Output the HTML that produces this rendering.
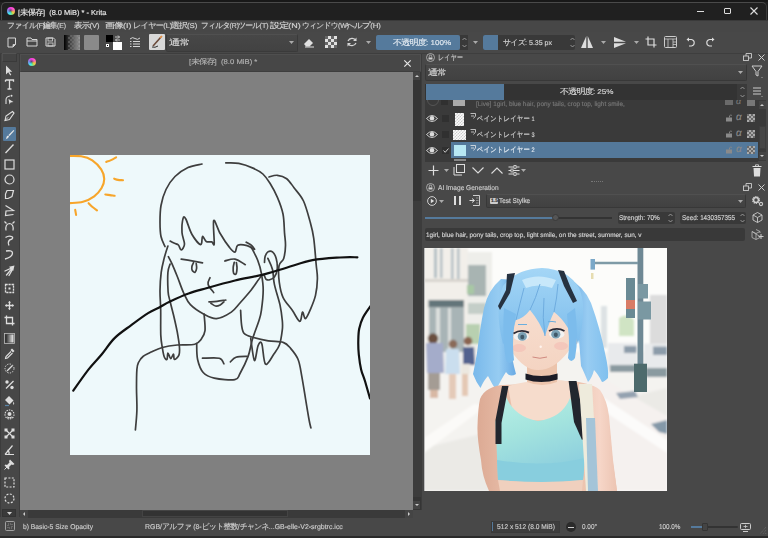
<!DOCTYPE html>
<html><head><meta charset="utf-8">
<style>
*{box-sizing:border-box;margin:0;padding:0}
html,body{width:768px;height:538px;overflow:hidden;background:#484848;font-family:"Liberation Sans",sans-serif;text-rendering:geometricPrecision;color:#c8c8c8}
.a{position:absolute}
.t{position:absolute;white-space:nowrap;font-size:7px;line-height:8px;-webkit-text-stroke:0.15px currentColor}
.jp{letter-spacing:-0.7px;font-size:1.12em;line-height:0}
svg{position:absolute;overflow:visible}
</style></head><body>
<!-- ===== title bar ===== -->
<div class="a" style="left:0;top:0;width:768px;height:20px;background:#202020"></div><div class="a" style="left:0;top:0;width:768px;height:2px;background:#181818"></div><div class="a" style="left:1px;top:2px;width:766px;height:18px;border-top:1px solid #4a4a4a;border-left:1px solid #4a4a4a;border-right:1px solid #3a3a3a;border-radius:5px 5px 0 0"></div>
<div class="a" style="left:6.6px;top:6.7px;width:8.4px;height:8.4px;border-radius:50%;background:radial-gradient(circle at 45% 45%,rgba(60,60,70,.7) 0,rgba(60,60,70,.35) 22%,transparent 40%),conic-gradient(#ff40e0 0deg,#ff60c0 60deg,#f0a860 100deg,#e8d040 130deg,#80e080 165deg,#40f0f0 210deg,#60b0f0 250deg,#9080e0 290deg,#e040f0 330deg,#ff40e0 360deg)"></div>
<div class="t" id="ti" style="left: 18.4px; top: 8.6px; color: rgb(232, 232, 232); font-size: 7.2px; transform-origin: 0px 50%; transform: scaleX(1.0376);">[<span class="jp">未保存</span>]&nbsp; (8.0 MiB) * - Krita</div>
<div class="a" style="left:697px;top:11px;width:7px;height:1px;background:#ddd"></div>
<div class="a" style="left:724px;top:7.5px;width:6.5px;height:6.5px;border:1px solid #ddd;border-radius:1px"></div>
<svg style="left:750px;top:7px" width="8" height="8"><path d="M0.5 0.5L7.5 7.5M7.5 0.5L0.5 7.5" stroke="#ddd" stroke-width="1.1"></path></svg>

<!-- ===== menu bar ===== -->
<div class="a" style="left:0;top:20px;width:768px;height:12px;background:#474747;border-top:1px solid #3a3a3a"></div>
<div class="t" id="m0" style="left: 7.11px; top: 23.3px; color: rgb(212, 212, 212); transform-origin: 0px 50%; transform: scaleX(1.0054);"><span class="jp">ファイル</span>(F)</div>
<div class="t" id="m1" style="left: 43.21px; top: 23.3px; color: rgb(212, 212, 212); transform-origin: 0px 50%; transform: scaleX(0.9752);"><span class="jp">編集</span>(E)</div>
<div class="t" id="m2" style="left: 74.11px; top: 23.3px; color: rgb(212, 212, 212); transform-origin: 0px 50%; transform: scaleX(1.087);"><span class="jp">表示</span>(V)</div>
<div class="t" id="m3" style="left: 104.5px; top: 23.3px; color: rgb(212, 212, 212); transform-origin: 0px 50%; transform: scaleX(1.2623);"><span class="jp">画像</span>(I)</div>
<div class="t" id="m4" style="left: 133px; top: 23.3px; color: rgb(212, 212, 212); transform-origin: 0px 50%; transform: scaleX(1.0427);"><span class="jp">レイヤー</span>(L)</div>
<div class="t" id="m5" style="left: 170.5px; top: 23.3px; color: rgb(212, 212, 212); transform-origin: 0px 50%; transform: scaleX(1.1175);"><span class="jp">選択</span>(S)</div>
<div class="t" id="m6" style="left: 200.8px; top: 23.3px; color: rgb(212, 212, 212); transform-origin: 0px 50%; transform: scaleX(0.9768);"><span class="jp">フィルタ</span>(R)</div>
<div class="t" id="m7" style="left: 238.11px; top: 23.3px; color: rgb(212, 212, 212); transform-origin: 0px 50%; transform: scaleX(0.9931);"><span class="jp">ツール</span>(T)</div>
<div class="t" id="m8" style="left: 269.8px; top: 23.3px; color: rgb(212, 212, 212); transform-origin: 0px 50%; transform: scaleX(1.281);"><span class="jp">設定</span>(N)</div>
<div class="t" id="m9" style="left: 302px; top: 23.3px; color: rgb(212, 212, 212); transform-origin: 0px 50%; transform: scaleX(0.9828);"><span class="jp">ウィンドウ</span>(W)</div>
<div class="t" id="m10" style="left: 346.11px; top: 23.3px; color: rgb(212, 212, 212); transform-origin: 0px 50%; transform: scaleX(1.1017);"><span class="jp">ヘルプ</span>(H)</div>


<!-- ===== toolbar ===== -->
<div class="a" style="left:0;top:32px;width:768px;height:21px;background:#484848"></div>
<div class="a" style="left:0;top:53px;width:768px;height:1px;background:#3e3e3e"></div>
<!-- new -->
<svg style="left:7px;top:37px" width="10" height="11"><path d="M1 1H8.5V7.5L6 10H1Z" fill="none" stroke="#d6d6d6" stroke-width="1"></path><path d="M6 10V7.5H8.5" fill="#d6d6d6" stroke="#d6d6d6" stroke-width="0.8"></path></svg>
<!-- open -->
<svg style="left:26px;top:37px" width="12" height="10"><path d="M1 1H5L6 2.5H11V9H1Z" fill="none" stroke="#d6d6d6" stroke-width="1"></path><path d="M1 4H11" stroke="#d6d6d6" stroke-width="1"></path></svg>
<!-- save -->
<svg style="left:45px;top:37px" width="11" height="10"><path d="M1 1H8.5L10 2.5V9H1Z" fill="none" stroke="#d6d6d6" stroke-width="1"></path><rect x="3" y="1" width="4.5" height="3" fill="none" stroke="#d6d6d6" stroke-width="0.8"></rect><rect x="3" y="6" width="5" height="3" fill="none" stroke="#d6d6d6" stroke-width="0.8"></rect></svg>
<!-- gradient -->
<div class="a" style="left:64px;top:34.5px;width:16px;height:15.5px;background:linear-gradient(90deg,#000,#444 40%,#999);"></div>
<div class="a" style="left:68px;top:34.5px;width:12px;height:15.5px;background-image:linear-gradient(45deg,#777 25%,transparent 25%,transparent 75%,#777 75%),linear-gradient(45deg,#777 25%,transparent 25%,transparent 75%,#777 75%);background-size:4px 4px;background-position:0 0,2px 2px;opacity:.5"></div>
<!-- pattern -->
<div class="a" style="left:83.5px;top:34.5px;width:15px;height:15.5px;background:#8a8a8a;border-radius:1px"></div>
<!-- fg/bg -->
<div class="a" style="left:105.5px;top:35px;width:7px;height:7px;background:#000"></div>
<div class="a" style="left:113px;top:42px;width:8.5px;height:8px;background:#fff"></div>
<div class="a" style="left:106px;top:44px;width:3px;height:3px;background:#000;border:0.5px solid #fff"></div>
<svg style="left:114px;top:35px" width="7" height="7"><path d="M1 2H5.5M4 0.5L5.5 2L4 3.5M6 5H1.5M3 3.5L1.5 5L3 6.5" fill="none" stroke="#ddd" stroke-width="0.8"></path></svg>
<!-- presets icon -->
<svg style="left:129px;top:36px" width="12" height="12"><path d="M1 3Q3.5 0.5 6 2.5T11 2" fill="none" stroke="#d6d6d6" stroke-width="1"></path><path d="M1 5.5H2.5M4 5.5H11M1 8H2.5M4 8H11M1 10.5H2.5M4 10.5H11" stroke="#d6d6d6" stroke-width="1"></path></svg>
<!-- brush preset -->
<div class="a" style="left:149px;top:34px;width:16px;height:16px;background:#d8d8d8;border-radius:1px"></div>
<svg style="left:149px;top:34px" width="16" height="16"><path d="M4 12L12 3" stroke="#6b4a3a" stroke-width="1.6"></path><path d="M11 4L13 2" stroke="#e89040" stroke-width="1.6"></path><path d="M3 13Q6 14 9 12" stroke="#333" stroke-width="1" fill="none"></path></svg>
<!-- blend combobox -->
<div class="a" style="left:166px;top:33.6px;width:132px;height:18.3px;background:linear-gradient(#474747,#424242);border:1px solid #3a3a3a;border-top-color:#505050;border-radius:2px"></div>
<div class="t" id="tb1" style="left: 168.5px; top: 40.1px; color: rgb(212, 212, 212); transform-origin: 0px 50%; transform: scaleX(1.4211);"><span class="jp">通常</span></div>
<svg style="left:289px;top:41px" width="5" height="3"><path d="M0 0H5L2.5 3Z" fill="#aaa"></path></svg>
<!-- eraser -->
<svg style="left:303px;top:36px" width="12" height="12"><path d="M1 8L6 3L10 7L6.5 10.5H3Z" fill="#e0e0e0"></path><path d="M2 11H11" stroke="#e0e0e0" stroke-width="1"></path></svg>
<!-- checker -->
<div class="a" style="left:325px;top:36px;width:12px;height:12px;background-image:linear-gradient(45deg,#e0e0e0 25%,transparent 25%,transparent 75%,#e0e0e0 75%),linear-gradient(45deg,#e0e0e0 25%,transparent 25%,transparent 75%,#e0e0e0 75%);background-color:#666;background-size:6px 6px;background-position:0 0,3px 3px"></div>
<!-- refresh -->
<svg style="left:346px;top:36px" width="12" height="12"><path d="M10 4.5A4.5 4.5 0 0 0 2 5M2 7.5A4.5 4.5 0 0 0 10 7" fill="none" stroke="#d6d6d6" stroke-width="1.2"></path><path d="M10.5 1.5V5H7Z M1.5 10.5V7H5Z" fill="#d6d6d6"></path></svg>
<svg style="left:366px;top:41px" width="5" height="3"><path d="M0 0H5L2.5 3Z" fill="#aaa"></path></svg>
<!-- opacity slider -->
<div class="a" style="left:376px;top:34.5px;width:84px;height:15.5px;background:#557a9c;border-radius:2px"></div>
<div class="t" id="tb2" style="left: 392.8px; top: 40px; color: rgb(224, 232, 240); transform-origin: 0px 50%; transform: scaleX(1.1581);"><span class="jp">不透明度</span>: 100%</div>
<div class="a" style="left:460px;top:34.5px;width:8px;height:15.5px;background:#393939"></div>
<svg style="left:462px;top:37px" width="5" height="11"><path d="M0.5 3L2.5 1L4.5 3M0.5 8L2.5 10L4.5 8" fill="none" stroke="#aaa" stroke-width="0.8"></path></svg>
<svg style="left:473px;top:41px" width="5" height="3"><path d="M0 0H5L2.5 3Z" fill="#aaa"></path></svg>
<!-- size slider -->
<div class="a" style="left:483px;top:34.5px;width:92px;height:15.5px;background:#393939;border-radius:2px"></div>
<div class="a" style="left:483px;top:34.5px;width:14.5px;height:15.5px;background:#557a9c;border-radius:2px 0 0 2px"></div>
<div class="t" id="tb3" style="left: 503.4px; top: 40px; color: rgb(212, 212, 212); transform-origin: 0px 50%; transform: scaleX(1.0053);"><span class="jp">サイズ</span>: 5.35 px</div>
<svg style="left:570px;top:37px" width="5" height="11"><path d="M0.5 3L2.5 1L4.5 3M0.5 8L2.5 10L4.5 8" fill="none" stroke="#aaa" stroke-width="0.8"></path></svg>
<!-- mirror -->
<svg style="left:580px;top:35px" width="14" height="14"><path d="M6.3 1L1 13H6.3Z" fill="#ddd"></path><path d="M7.7 1L13 13H7.7Z" fill="#ddd"></path></svg>
<svg style="left:601px;top:41px" width="5" height="3"><path d="M0 0H5L2.5 3Z" fill="#aaa"></path></svg>
<svg style="left:613px;top:36px" width="14" height="13"><path d="M1 1L13 5.8H1Z" fill="#ddd"></path><path d="M1 7.2H13L1 12Z" fill="#ddd"></path></svg>
<svg style="left:634px;top:41px" width="5" height="3"><path d="M0 0H5L2.5 3Z" fill="#aaa"></path></svg>
<!-- crop -->
<svg style="left:645px;top:36px" width="12" height="12"><path d="M3 0.5V9H11.5M0.5 3H9V11.5" fill="none" stroke="#ddd" stroke-width="1.2"></path></svg>
<!-- table -->
<svg style="left:664px;top:36px" width="13" height="12"><rect x="0.5" y="0.5" width="12" height="11" rx="1" fill="none" stroke="#ccc"></rect><path d="M0.5 3H12.5M4 3V11.5M9 3V11.5M9 6H12.5M9 8.5H12.5" stroke="#ccc" stroke-width="0.8"></path></svg>
<!-- undo redo -->
<svg style="left:686px;top:37px" width="10" height="10"><path d="M2.5 2.5H5.5A3.3 3.3 0 0 1 5.5 9H3" fill="none" stroke="#ddd" stroke-width="1.1"></path><path d="M0.5 2.5L3 0.5V4.5Z" fill="#ddd"></path></svg>
<svg style="left:705px;top:37px" width="10" height="10"><path d="M7.5 2.5H4.5A3.3 3.3 0 0 0 4.5 9H7" fill="none" stroke="#ddd" stroke-width="1.1"></path><path d="M9.5 2.5L7 0.5V4.5Z" fill="#ddd"></path></svg>

<!-- ===== left toolbox ===== -->
<div class="a" style="left:0;top:54px;width:20px;height:463px;background:#474747;border-left:1.5px solid #3c3c3c;border-right:1px solid #3c3c3c"></div>
<div class="a" style="left:1.5px;top:53px;width:15.5px;height:8.5px;background:#444;border:1px solid #3a3a3a;border-top-color:#535353;border-left-color:#505050"></div>
<div class="a" style="left:2.5px;top:127px;width:13.5px;height:14px;background:#557a9c;border-radius:1px"></div>
<div class="a" style="left:2px;top:509px;width:14px;height:8px;background:#393939;border:1px solid #333"></div>
<svg style="left:7px;top:512px" width="5" height="3"><path d="M0 0H5L2.5 3Z" fill="#ccc"></path></svg>
<!--TOOLS-->
<svg style="left:0;top:0;width:0;height:0"><defs><linearGradient id="g1"><stop offset="0" stop-color="#222"/><stop offset="1" stop-color="#eee"/></linearGradient></defs></svg>
<svg style="left:2.8px;top:64.5px" width="11" height="11"><path d="M3 0.5V9.5L5.2 7.3L7.3 10.5L8.3 9.8L6.3 6.8H9.2Z" fill="#ddd"/></svg>
<svg style="left:3.5px;top:78.5px" width="11" height="11"><path d="M1.5 1H9.5V2.8M5.5 1V10M3.5 10H7.5M1.5 1V2.8" fill="none" stroke="#ddd" stroke-width="1.3"/></svg>
<svg style="left:3.5px;top:94.0px" width="11" height="11"><path d="M2 10V6Q2 2.5 6 2" fill="none" stroke="#ddd" stroke-width="1.1"/><circle cx="7.5" cy="1.8" r="1" fill="#ddd"/><path d="M4.5 5L9.5 8L6.5 8.5L5.5 10.5Z" fill="#ddd"/></svg>
<svg style="left:3.5px;top:109.5px" width="11" height="11"><path d="M8.5 1.5L10 3L5.5 9.5L1 10.5L2 6Z" fill="none" stroke="#ddd" stroke-width="1.1"/><path d="M1 10.5L4.2 7.3" stroke="#ddd" stroke-width="0.9"/></svg>
<svg style="left:3.5px;top:128.5px" width="11" height="11"><path d="M9.5 1L10.3 1.8L5.5 7L4.5 6Z" fill="#e8e8e8"/><path d="M4.2 6.5L5 7.3Q4.5 10 1.5 10.5Q2.5 9.5 2.5 8Q3 6.8 4.2 6.5Z" fill="#e8e8e8"/></svg>
<svg style="left:3.5px;top:143.1px" width="11" height="11"><path d="M1.5 10L9.5 1.5" stroke="#ddd" stroke-width="1.3"/></svg>
<svg style="left:3.5px;top:158.5px" width="11" height="11"><rect x="1" y="1" width="9" height="9" fill="none" stroke="#ddd" stroke-width="1.2"/></svg>
<svg style="left:3.5px;top:174.2px" width="11" height="11"><circle cx="5.5" cy="5.5" r="4.5" fill="none" stroke="#ddd" stroke-width="1.2"/></svg>
<svg style="left:3.5px;top:188.5px" width="11" height="11"><path d="M3 1.5H9.5L8 7.5L4 9.5H1.5L1.5 5Z" fill="none" stroke="#ddd" stroke-width="1.2"/></svg>
<svg style="left:3.5px;top:204.5px" width="11" height="11"><path d="M1.5 0.5L9.5 5.5L2 6L1.5 10.5L9.5 9.5" fill="none" stroke="#ddd" stroke-width="1.2"/></svg>
<svg style="left:3.5px;top:219.5px" width="11" height="11"><path d="M2 10.5Q1 4 5.5 3.5Q10 4 9 10.5M0.5 1.5L2.5 3.5M10.5 1.5L8.5 3.5" fill="none" stroke="#ddd" stroke-width="1.2"/></svg>
<svg style="left:3.5px;top:234.5px" width="11" height="11"><path d="M1.5 2.5Q5 0 8.5 2Q9.5 4 5.5 5Q3.5 7 5 10.5" fill="none" stroke="#ddd" stroke-width="1.3"/></svg>
<svg style="left:3.5px;top:249.0px" width="11" height="11"><path d="M2 2Q8 1 8.5 4Q8.5 8 1 10" fill="none" stroke="#ddd" stroke-width="1.3"/></svg>
<svg style="left:3.5px;top:264.5px" width="11" height="11"><path d="M10.5 0.5L5 1.8L9.2 6Z" fill="#ddd"/><path d="M1 6L7.5 3M2.5 10L8 3.5M5 10.5L8.5 4.5" fill="none" stroke="#ddd" stroke-width="1.3" stroke-linecap="round"/></svg>
<svg style="left:3.5px;top:282.5px" width="11" height="11"><rect x="1.5" y="1.5" width="8" height="8" fill="none" stroke="#ddd" stroke-width="1.3" stroke-dasharray="2.2 0.8"/><rect x="4.5" y="4.5" width="2" height="2" fill="#ddd"/></svg>
<svg style="left:3.5px;top:299.5px" width="11" height="11"><path d="M5.5 1.5V9.5M1.5 5.5H9.5" stroke="#ddd" stroke-width="1.3"/><path d="M5.5 1L7 2.8H4ZM5.5 10L7 8.2H4ZM1 5.5L2.8 4V7ZM10 5.5L8.2 4V7Z" fill="#ddd"/></svg>
<svg style="left:3.5px;top:314.5px" width="11" height="11"><path d="M2.5 0.5V8.5H10.5M0.5 2.5H8.5V10.5" fill="none" stroke="#ddd" stroke-width="1.3"/></svg>
<svg style="left:3.5px;top:332.5px" width="11" height="11"><rect x="0.5" y="0.5" width="10" height="10" fill="none" stroke="#bbb" stroke-width="0.8"/><rect x="1.5" y="1.5" width="8" height="8" fill="url(#g1)"/></svg>
<svg style="left:3.5px;top:347.5px" width="11" height="11"><path d="M8 0.5L10.5 3L9 4.5L6.5 2Z" fill="#ddd"/><path d="M7 3.5L2 8.5L1.5 10.5L3.5 10L8.5 5" fill="none" stroke="#ddd" stroke-width="1.1"/></svg>
<svg style="left:3.5px;top:363.0px" width="11" height="11"><circle cx="5.5" cy="5.5" r="4.5" fill="none" stroke="#ddd" stroke-width="1" stroke-dasharray="1.3 1.3"/><path d="M3 8L8.5 2.5" stroke="#ddd" stroke-width="1.3"/></svg>
<svg style="left:3.5px;top:378.5px" width="11" height="11"><path d="M2 9.5L9.5 2" stroke="#ddd" stroke-width="1.2"/><circle cx="3" cy="3" r="1.7" fill="#ddd"/><circle cx="8" cy="8.5" r="1.7" fill="#ddd"/></svg>
<svg style="left:3.5px;top:394.5px" width="11" height="11"><path d="M1 5L5 1L9.5 5.5L5.5 9.5Z" fill="#ddd"/><path d="M9.5 6.5Q10.8 8.5 9.8 9.8Q8.6 9.8 9.5 6.5Z" fill="#ddd"/><path d="M1 10.5H5" stroke="#5b86a8" stroke-width="1.2"/></svg>
<svg style="left:3.5px;top:408.5px" width="11" height="11"><circle cx="5.5" cy="5.5" r="4.5" fill="none" stroke="#ddd" stroke-width="1.1" stroke-dasharray="1.5 1"/><circle cx="5.5" cy="5" r="2" fill="#ddd"/><path d="M3 8Q5.5 9.5 8 8" stroke="#ddd" fill="none"/></svg>
<svg style="left:3.5px;top:427.5px" width="11" height="11"><path d="M2 2L9 9M9 2L2 9" stroke="#ddd" stroke-width="1.1"/><rect x="0.5" y="0.5" width="3" height="3" fill="#ddd"/><rect x="7.5" y="0.5" width="3" height="3" fill="#ddd"/><rect x="0.5" y="7.5" width="3" height="3" fill="#ddd"/><rect x="7.5" y="7.5" width="3" height="3" fill="#ddd"/></svg>
<svg style="left:3.5px;top:443.5px" width="11" height="11"><path d="M1 10.5H10M1 10.5L8.5 1.5M5 10.5Q5.5 7.5 3.5 6" fill="none" stroke="#ddd" stroke-width="1.2"/></svg>
<svg style="left:3.5px;top:458.5px" width="11" height="11"><path d="M6 0.5L10.5 5L9 6L7.5 5.5L5 8L5.5 9.5L4.5 10.5L0.5 6.5L1.5 5.5L3 6L5.5 3.5L5 2Z" fill="#ddd"/><path d="M3.5 7.5L0.5 10.5" stroke="#ddd" stroke-width="1"/></svg>
<svg style="left:3.5px;top:477.1px" width="11" height="11"><rect x="1" y="1" width="9" height="9" fill="none" stroke="#ddd" stroke-width="1.2" stroke-dasharray="2 1.4"/></svg>
<svg style="left:3.5px;top:492.5px" width="11" height="11"><circle cx="5.5" cy="5.5" r="4.5" fill="none" stroke="#ddd" stroke-width="1.2" stroke-dasharray="2 1.5"/></svg>
<!--/TOOLS-->

<!-- ===== document window ===== -->
<div class="a" style="left:20px;top:54px;width:401px;height:17.7px;background:#474747;border-top:1px solid #4f4f4f;border-left:1px solid #4f4f4f;border-right:1px solid #505050;border-bottom:1px solid #3e3e3e"></div>
<div class="a" style="left:28px;top:58px;width:8.4px;height:8.4px;border-radius:50%;background:radial-gradient(circle at 45% 45%,rgba(60,60,70,.7) 0,rgba(60,60,70,.35) 22%,transparent 40%),conic-gradient(#ff40e0 0deg,#ff60c0 60deg,#f0a860 100deg,#e8d040 130deg,#80e080 165deg,#40f0f0 210deg,#60b0f0 250deg,#9080e0 290deg,#e040f0 330deg,#ff40e0 360deg)"></div>
<div class="t" id="dt" style="left: 188.9px; top: 59.4px; color: rgb(176, 176, 176); font-size: 6.8px; transform-origin: 0px 50%; transform: scaleX(1.1316);">[<span class="jp">未保存</span>]&nbsp; (8.0 MiB) *</div>
<svg style="left:404px;top:60px" width="7" height="7"><path d="M0.3 0.3L6.7 6.7M6.7 0.3L0.3 6.7" stroke="#e6e6e6" stroke-width="1.2"></path></svg>
<div class="a" style="left:20px;top:72px;width:393px;height:437.5px;background:#808080"></div>
<!-- scrollbars -->
<div class="a" style="left:413px;top:72px;width:8px;height:437.5px;background:#353535"></div><div class="a" style="left:413px;top:201px;width:8px;height:296px;background:#3c3c3c"></div>
<div class="a" style="left:413px;top:72px;width:7px;height:8px;background:#444"></div>
<svg style="left:414.5px;top:75px" width="4" height="2"><path d="M0 2H4L2 0Z" fill="#ccc"></path></svg>
<div class="a" style="left:413px;top:501px;width:7px;height:8px;background:#444"></div>
<svg style="left:414.5px;top:504px" width="4" height="2"><path d="M0 0H4L2 2Z" fill="#ccc"></path></svg>
<div class="a" style="left:20px;top:509.5px;width:393px;height:8px;background:#3a3a3a"></div>
<div class="a" style="left:20px;top:509.5px;width:8px;height:8px;background:#444"></div>
<svg style="left:23px;top:511.5px" width="2" height="4"><path d="M2 0V4L0 2Z" fill="#ccc"></path></svg>
<div class="a" style="left:405px;top:509.5px;width:8px;height:8px;background:#444"></div>
<svg style="left:408px;top:511.5px" width="2" height="4"><path d="M0 0V4L2 2Z" fill="#ccc"></path></svg>
<div class="a" style="left:142px;top:510px;width:146px;height:7px;background:#333;border:1px solid #444"></div>
<!-- paper -->
<div class="a" style="left:70px;top:154.5px;width:299.5px;height:300px;background:#eef9fb"></div>
<!--DRAW--><svg style="left:70px;top:154.5px;overflow:hidden" width="299.5" height="300" viewBox="70 154.5 299.5 300"><g fill="none" stroke-linecap="round" stroke-linejoin="round"><path d="M66.0 155.5C68.5 155.6 76.8 155.1 81.2 155.8C85.6 156.5 89.0 157.6 92.3 159.8C95.6 162.0 99.2 165.8 101.2 168.9C103.2 172.0 104.1 175.1 104.2 178.2C104.3 181.3 103.3 184.6 101.6 187.5C99.9 190.4 97.3 193.5 94.2 195.8C91.1 198.1 87.0 200.1 83.0 201.2C79.0 202.3 72.2 202.4 70.0 202.6" stroke="#f7a52a" stroke-width="2.1"></path><path d="M106.2 161.4C107.0 161.1 109.3 160.4 111.0 159.6C112.7 158.8 115.2 157.3 116.1 156.8" stroke="#f7a52a" stroke-width="2.1"></path><path d="M114.2 178.2C114.8 178.4 116.5 179.2 118.0 179.4C119.5 179.7 122.2 179.6 123.0 179.7" stroke="#f7a52a" stroke-width="2.1"></path><path d="M105.3 194.0C106.1 194.1 108.5 194.4 110.0 194.6C111.5 194.8 113.8 195.2 114.6 195.3" stroke="#f7a52a" stroke-width="2.1"></path><path d="M88.6 202.7C89.2 203.3 91.1 205.3 92.5 206.5C93.9 207.7 96.2 209.2 97.0 209.8" stroke="#f7a52a" stroke-width="2.1"></path><path d="M75.2 209.4L76.1 214.4" stroke="#f7a52a" stroke-width="2.1"></path><path d="M202.0 163.5C199.7 164.1 192.5 164.9 188.0 167.0C183.5 169.1 178.7 172.3 175.0 176.0C171.3 179.7 168.3 184.2 166.0 189.0C163.7 193.8 162.0 199.5 161.0 205.0C160.0 210.5 160.0 216.8 160.0 222.0C160.0 227.2 160.2 232.0 161.0 236.0C161.8 240.0 164.3 244.3 165.0 246.0" stroke="#3e3e3e" stroke-width="1.7"></path><path d="M225.8 162.4C228.0 162.5 234.2 162.0 238.8 162.9C243.4 163.8 249.6 166.1 253.6 167.9C257.6 169.7 260.2 171.0 262.9 173.5C265.6 176.0 267.6 178.9 270.0 182.8C272.4 186.7 275.2 191.7 277.4 196.8C279.6 201.9 281.8 207.6 283.0 213.5C284.2 219.4 284.1 226.9 284.5 232.1C284.9 237.3 285.6 240.6 285.5 244.9C285.4 249.2 284.8 254.5 283.7 257.9C282.6 261.3 279.7 261.3 279.0 265.3C278.3 269.3 278.6 276.6 279.3 281.9C280.0 287.1 280.8 292.1 283.0 296.8C285.2 301.5 289.5 305.8 292.3 309.8C295.1 313.8 298.0 320.6 299.7 320.9C301.4 321.2 301.6 312.1 302.5 311.6C303.4 311.1 304.1 318.4 305.3 318.1C306.6 317.8 308.3 313.7 310.0 309.8C311.7 305.9 314.3 300.2 315.5 294.9C316.7 289.6 317.3 283.5 317.4 278.2C317.5 272.9 316.7 270.1 316.1 263.3C315.5 256.5 314.7 244.7 313.7 237.6C312.7 230.5 311.7 227.1 310.0 220.9C308.3 214.7 306.1 206.1 303.5 200.5C300.9 194.9 297.0 191.2 294.2 187.5C291.4 183.8 289.5 180.3 286.7 178.2C283.9 176.1 280.3 175.1 277.4 174.8C274.4 174.5 270.4 176.2 269.0 176.5" stroke="#3e3e3e" stroke-width="1.7"></path><path d="M170.1 240.6C170.8 241.0 173.1 242.2 174.5 242.8C175.9 243.5 177.3 243.4 178.4 244.5C179.5 245.6 180.2 249.7 181.2 249.5C182.2 249.3 184.4 246.4 184.5 243.5C184.6 240.6 182.2 236.2 182.0 232.0C181.8 227.8 182.4 220.3 183.0 218.1C183.6 215.8 184.3 215.8 185.8 218.5C187.3 221.2 189.5 229.7 192.0 234.0C194.5 238.3 198.9 243.8 200.7 244.1C202.4 244.4 201.6 236.5 202.5 236.0C203.4 235.5 204.6 240.1 206.2 241.0C207.8 241.9 210.5 241.0 211.8 241.4C213.1 241.8 213.9 246.8 214.2 243.2C214.5 239.6 212.7 221.7 213.7 220.0C214.7 218.3 217.6 228.5 220.2 233.0C222.8 237.5 227.0 243.8 229.5 246.9C232.0 250.0 233.6 252.0 235.0 251.6C236.4 251.2 235.8 245.8 237.8 244.7C239.8 243.6 244.4 244.4 247.1 245.1C249.8 245.8 252.8 248.0 253.9 248.6" stroke="#3e3e3e" stroke-width="1.7"></path><path d="M246.2 241.7C247.1 242.3 250.4 243.9 251.8 245.1C253.2 246.3 254.1 248.2 254.6 248.8" stroke="#3e3e3e" stroke-width="1.7"></path><path d="M167.9 245.6C167.2 247.7 165.1 254.0 164.0 258.4C162.9 262.8 161.9 266.5 161.2 271.8C160.5 277.1 160.1 283.7 160.0 290.0C159.9 296.3 160.6 302.3 160.7 309.8C160.8 317.3 160.5 328.7 160.8 334.9C161.1 341.1 161.7 343.4 162.3 347.0C162.9 350.6 163.4 354.2 164.2 356.2C165.0 358.2 166.4 359.6 167.0 359.0C167.6 358.4 167.3 352.6 167.9 352.5C168.5 352.4 169.8 357.9 170.7 358.1C171.6 358.3 172.9 353.4 173.5 353.5C174.1 353.6 173.5 358.9 174.4 359.0C175.3 359.1 178.2 356.6 179.0 354.4C179.8 352.2 179.7 349.9 179.4 346.0C179.1 342.1 178.1 336.3 177.2 331.2C176.2 326.1 174.9 320.4 173.7 315.3C172.5 310.2 170.9 304.5 170.0 300.5C169.1 296.5 168.4 295.9 168.1 291.2C167.8 286.4 167.6 276.6 167.9 272.0C168.2 267.4 169.7 264.9 170.1 263.5" stroke="#3e3e3e" stroke-width="1.7"></path><path d="M168.4 256.2C169.0 257.3 170.3 259.5 171.8 262.9C173.3 266.2 175.4 271.3 177.4 276.3C179.4 281.3 181.7 288.4 183.9 293.0C186.1 297.6 187.1 300.8 190.4 304.2C193.7 307.6 199.2 311.2 203.5 313.5C207.8 315.8 211.9 318.4 216.5 318.1C221.1 317.8 227.4 314.2 231.3 311.6C235.2 309.0 236.7 306.2 240.0 302.5C243.3 298.8 247.5 294.1 251.2 289.5C254.9 284.9 259.8 276.4 262.3 274.6C264.8 272.8 264.8 277.9 266.0 278.7C267.2 279.5 268.3 279.7 269.7 279.3C271.1 278.9 273.1 278.2 274.4 276.5C275.6 274.8 276.9 272.1 277.2 269.0C277.5 265.9 277.0 260.8 276.2 257.9C275.4 255.0 273.9 252.5 272.5 251.4C271.1 250.3 269.1 250.6 267.9 251.4C266.7 252.2 265.7 254.2 265.1 256.0C264.5 257.8 264.6 261.0 264.5 262.0" stroke="#3e3e3e" stroke-width="1.7"></path><path d="M196.7 343.2C196.8 345.8 196.5 354.2 197.6 359.0C198.7 363.8 200.4 368.9 203.2 372.0C206.0 375.1 209.0 376.4 214.3 377.6C219.6 378.8 230.5 379.9 234.8 379.1C239.1 378.3 237.8 376.9 240.0 373.0C242.2 369.1 246.0 361.6 248.1 355.9C250.2 350.2 250.7 344.6 252.5 338.6C254.3 332.6 257.5 324.8 259.0 320.0C260.5 315.2 260.7 315.0 261.4 309.9C262.1 304.8 263.2 295.7 263.2 289.5C263.2 283.3 262.3 277.8 261.4 272.8C260.5 267.8 259.4 264.1 257.7 259.7C256.0 255.3 252.3 248.9 251.2 246.7" stroke="#3e3e3e" stroke-width="1.7"></path><path d="M204.1 313.5C204.2 316.3 205.5 326.0 205.0 330.2C204.5 334.4 203.0 336.3 201.3 338.6C199.6 340.9 198.8 342.8 194.8 343.8C190.8 344.8 182.6 344.0 177.2 344.5C171.8 345.0 166.6 345.8 162.3 347.0C158.0 348.2 154.4 350.1 151.2 351.6C148.0 353.1 145.1 354.3 143.0 356.0C140.9 357.7 139.5 359.9 138.5 362.0C137.5 364.1 137.2 364.6 136.9 368.9C136.6 373.1 136.5 380.7 136.5 387.5C136.5 394.3 137.1 402.8 136.9 409.8C136.7 416.8 135.7 426.1 135.4 429.3" stroke="#3e3e3e" stroke-width="1.7"></path><path d="M240.6 309.8C240.8 312.3 241.0 320.7 241.6 324.6C242.2 328.5 242.4 331.0 244.2 333.0C246.0 335.0 248.5 335.5 252.5 336.7C256.5 337.9 263.2 339.5 268.3 340.4C273.4 341.3 279.5 340.6 283.2 341.9C286.9 343.1 288.1 345.0 290.6 347.9C293.1 350.8 296.2 354.4 298.1 359.0C300.0 363.6 300.6 369.3 301.8 375.8C303.0 382.3 304.3 390.7 305.5 398.1C306.7 405.5 308.3 415.1 309.2 420.0C310.1 424.9 310.6 426.2 310.9 427.4" stroke="#3e3e3e" stroke-width="1.7"></path><path d="M202.5 357.7C205.3 357.7 215.7 356.8 219.3 357.7C222.9 358.6 223.1 362.4 223.9 363.3" stroke="#3e3e3e" stroke-width="1.7"></path><path d="M230.4 361.4C231.3 360.6 233.2 357.7 236.0 356.8C238.8 355.9 245.2 356.0 247.1 355.9" stroke="#3e3e3e" stroke-width="1.7"></path><path d="M267.9 257.9C268.7 259.8 271.4 264.7 272.5 269.0C273.6 273.3 273.1 278.0 274.4 283.9C275.6 289.8 278.7 298.4 280.0 304.4C281.3 310.4 281.9 315.9 282.3 320.0C282.7 324.1 282.8 325.3 282.3 329.3C281.8 333.3 280.9 340.2 279.5 344.2C278.1 348.2 276.2 350.2 273.9 353.5C271.6 356.8 267.5 365.4 265.5 363.7C263.5 362.0 263.0 346.3 261.8 343.2C260.6 340.1 259.3 342.3 258.1 345.1C256.9 347.9 255.6 361.2 254.4 360.0C253.2 358.8 251.3 341.4 250.7 337.7" stroke="#3e3e3e" stroke-width="1.7"></path><path d="M181.2 258.6C183.0 258.9 188.4 259.7 192.0 260.3C195.6 260.9 200.8 262.0 202.5 262.4" stroke="#3e3e3e" stroke-width="1.7"></path><path d="M193.5 262.2C193.2 262.8 192.1 264.7 191.9 266.0C191.7 267.3 191.8 269.1 192.3 270.0C192.8 270.9 194.4 272.1 195.1 271.7C195.8 271.3 196.4 269.3 196.6 267.9C196.8 266.4 196.3 263.8 196.2 263.0" stroke="#3e3e3e" stroke-width="1.7"></path><path d="M224.8 260.5C226.5 260.2 231.6 258.0 235.0 258.6C238.4 259.2 243.6 263.3 245.3 264.2" stroke="#3e3e3e" stroke-width="1.7"></path><path d="M234.3 261.8C234.1 262.7 233.3 265.2 233.2 267.0C233.1 268.8 233.1 271.5 233.6 272.6C234.1 273.7 235.4 274.3 236.0 273.5C236.6 272.7 236.9 269.9 237.0 268.0C237.1 266.1 236.5 263.0 236.4 262.0" stroke="#3e3e3e" stroke-width="1.7"></path><path d="M210.0 277.2C209.7 278.3 207.5 281.2 208.1 283.7C208.7 286.2 212.8 290.7 213.7 292.1" stroke="#3e3e3e" stroke-width="1.7"></path><path d="M209.0 301.4C210.3 301.3 214.2 301.1 217.0 300.8C219.8 300.5 224.3 299.7 225.8 299.5" stroke="#3e3e3e" stroke-width="1.7"></path><path d="M210.9 302.7C211.7 303.2 213.9 305.2 215.5 305.5C217.1 305.8 218.8 305.1 220.2 304.4C221.6 303.7 223.3 301.9 223.9 301.4" stroke="#3e3e3e" stroke-width="1.7"></path><path d="M73.3 390.2C75.8 386.6 83.9 374.9 88.6 368.9C93.3 362.9 97.3 359.2 101.6 354.0C105.9 348.8 109.6 342.5 114.6 337.6C119.5 332.7 125.7 328.8 131.3 324.6C136.9 320.4 143.4 315.5 148.1 312.6C152.8 309.7 155.5 308.9 159.2 307.0C162.8 305.1 165.1 303.3 170.0 301.0C174.9 298.7 182.4 295.2 188.6 293.0C194.8 290.8 199.5 289.7 207.2 287.5C214.9 285.3 225.9 282.2 235.0 280.0C244.1 277.8 253.4 276.5 262.0 274.4C270.6 272.3 278.1 269.6 286.5 267.2C294.9 264.8 303.6 261.4 312.5 259.7C321.4 258.0 332.5 257.5 340.0 257.0C347.5 256.5 354.5 256.8 357.4 256.8" stroke="#111" stroke-width="2.2"></path><path d="M371.0 305.0C369.6 307.0 364.9 313.3 362.9 317.2C360.9 321.1 360.0 324.5 359.2 328.3C358.4 332.1 358.4 335.7 358.3 340.0C358.2 344.3 358.3 349.2 358.8 354.0C359.3 358.8 360.1 364.6 361.1 368.9C362.1 373.2 363.3 375.1 364.8 380.0C366.3 384.9 369.1 395.0 370.0 398.0" stroke="#111" stroke-width="2.2"></path></g></svg><!--/DRAW-->

<!-- ===== right dockers ===== -->
<div class="a" style="left:421px;top:54px;width:1px;height:456px;background:#3c3c3c"></div>
<!-- layers docker -->
<svg style="left:425.5px;top:53px" width="9" height="9"><circle cx="4.5" cy="4.5" r="4" fill="none" stroke="#bbb" stroke-width="0.8"></circle><path d="M2.5 6.5H6.5V4.5H2.5Z" fill="#ccc"></path><path d="M3.3 4.5V3.3A1.2 1.2 0 0 1 5.7 3.3V4.5" fill="none" stroke="#ccc" stroke-width="0.7"></path></svg>
<div class="t" id="lh" style="left: 438.4px; top: 54.5px; color: rgb(204, 204, 204); transform-origin: 0px 50%; transform: scaleX(0.7615);"><span class="jp" style="letter-spacing:.3px">レイヤー</span></div>
<svg style="left:743px;top:53px" width="9" height="8"><rect x="0.5" y="3" width="5" height="4.5" fill="none" stroke="#ccc" stroke-width="0.9"></rect><path d="M3 3V0.5H8.5V5H5.5" fill="none" stroke="#ccc" stroke-width="0.9"></path></svg>
<svg style="left:757.5px;top:53.5px" width="7" height="7"><path d="M0.5 0.5L6.5 6.5M6.5 0.5L0.5 6.5" stroke="#ccc" stroke-width="1"></path></svg>
<div class="a" style="left:425px;top:63.5px;width:322px;height:17px;background:linear-gradient(#474747,#414141);border:1px solid #383838;border-top-color:#505050;border-radius:2px"></div>
<div class="t" id="lb" style="left: 427.5px; top: 69.5px; color: rgb(212, 212, 212); transform-origin: 0px 50%; transform: scaleX(1.2568);"><span class="jp">通常</span></div>
<svg style="left:738px;top:71px" width="5" height="3"><path d="M0 0H5L2.5 3Z" fill="#aaa"></path></svg>
<svg style="left:751px;top:65px" width="13" height="14"><path d="M1 1H11L7 6.5V11L5 10V6.5Z" fill="none" stroke="#ccc" stroke-width="1"></path><path d="M10 12H12L11 13Z" fill="#aaa"></path></svg>
<div class="a" style="left:425px;top:83.5px;width:312px;height:16.5px;background:#333"></div>
<div class="a" style="left:425.5px;top:83.5px;width:78.5px;height:16.5px;background:#557a9c"></div>
<div class="t" id="lo" style="left: 559.5px; top: 88.71px; color: rgb(212, 212, 212); transform-origin: 0px 50%; transform: scaleX(1.153);"><span class="jp">不透明度</span>: 25%</div>
<div class="a" style="left:737px;top:83.5px;width:10px;height:16.5px;background:#3a3a3a"></div>
<svg style="left:740px;top:86px" width="5" height="12"><path d="M0.5 3L2.5 1L4.5 3M0.5 9L2.5 11L4.5 9" fill="none" stroke="#aaa" stroke-width="0.8"></path></svg>
<svg style="left:752px;top:86px" width="12" height="12"><path d="M1 2H9M1 5H9M1 8H9" stroke="#ccc" stroke-width="1.2"></path><path d="M9 10H11L10 11Z" fill="#aaa"></path></svg>
<!-- layer list -->
<div class="a" style="left:425px;top:100px;width:333px;height:61.5px;background:#3a3a3a;overflow:hidden">
  <!-- row0 partial -->
  <div class="a" style="left:2px;top:-6px;width:12px;height:12px;border-radius:50%;border:1px solid #555"></div>
  <div class="a" style="left:16px;top:-2px;width:7px;height:7px;background:#303030"></div>
  <div class="a" style="left:28px;top:-3px;width:12px;height:9px;background:#aaa"></div>
  <div class="t" id="live" style="left: 51.21px; top: 0.5px; color: rgb(119, 119, 119); font-size: 6.6px; transform-origin: 0px 50%; transform: scaleX(0.9759);">[Live] 1girl, blue hair, pony tails, crop top, light smile,</div>
  <div class="a" style="left:300px;top:-1px;width:8px;height:6px;background:#6a6a6a"></div>
  <div class="t" style="left:311px;top:-3px;color:#777;font-size:9px;font-style:italic">α</div>
  <div class="a" style="left:322px;top:-2px;width:8px;height:8px;background:#777"></div>
  <!-- row selected -->
  <div class="a" style="left:26px;top:42.4px;width:307px;height:15.5px;background:#54799b"></div>
</div>
<!-- row1 -->
<svg style="left:426px;top:113.5px" width="12" height="9"><path d="M0.5 4.5Q6 -1.5 11.5 4.5Q6 10.5 0.5 4.5Z" fill="none" stroke="#ddd" stroke-width="0.9"></path><circle cx="6" cy="4.3" r="2.3" fill="#ddd"></circle></svg>
<div class="a" style="left:441.5px;top:114.5px;width:7px;height:7px;background:#303030"></div>
<div class="a" style="left:455px;top:113px;width:8.5px;height:12.5px;background:#fafafa;background-image:linear-gradient(45deg,#ccc 25%,transparent 25%,transparent 75%,#ccc 75%),linear-gradient(45deg,#ccc 25%,transparent 25%,transparent 75%,#ccc 75%);background-size:3px 3px;background-position:0 0,1.5px 1.5px"></div>
<svg style="left:469.5px;top:111.5px" width="7" height="7"><path d="M0.5 1.5H5.5V4L3.5 6.5M1 4H4" fill="none" stroke="#ddd" stroke-width="0.8"></path></svg>
<div class="t" id="r1" style="left: 476.5px; top: 115.8px; color: rgb(212, 212, 212); font-size: 6.6px; transform-origin: 0px 50%; transform: scaleX(0.8567);"><span class="jp" style="letter-spacing:.2px">ペイントレイヤー</span> 1</div>
<!-- row2 -->
<svg style="left:426px;top:129.5px" width="12" height="9"><path d="M0.5 4.5Q6 -1.5 11.5 4.5Q6 10.5 0.5 4.5Z" fill="none" stroke="#ddd" stroke-width="0.9"></path><circle cx="6" cy="4.3" r="2.3" fill="#ddd"></circle></svg>
<div class="a" style="left:441.5px;top:130.5px;width:7px;height:7px;background:#303030"></div>
<div class="a" style="left:453px;top:130px;width:12.5px;height:9.5px;background:#fafafa;background-image:linear-gradient(45deg,#ccc 25%,transparent 25%,transparent 75%,#ccc 75%),linear-gradient(45deg,#ccc 25%,transparent 25%,transparent 75%,#ccc 75%);background-size:3px 3px;background-position:0 0,1.5px 1.5px"></div>
<svg style="left:469.5px;top:127.5px" width="7" height="7"><path d="M0.5 1.5H5.5V4L3.5 6.5M1 4H4" fill="none" stroke="#ddd" stroke-width="0.8"></path></svg>
<div class="t" id="r2" style="left: 476.5px; top: 131.5px; color: rgb(212, 212, 212); font-size: 6.6px; transform-origin: 0px 50%; transform: scaleX(0.8567);"><span class="jp" style="letter-spacing:.2px">ペイントレイヤー</span> 3</div>
<!-- row3 selected -->
<svg style="left:426px;top:145.5px" width="12" height="9"><path d="M0.5 4.5Q6 -1.5 11.5 4.5Q6 10.5 0.5 4.5Z" fill="none" stroke="#ddd" stroke-width="0.9"></path><circle cx="6" cy="4.3" r="2.3" fill="#ddd"></circle></svg>
<div class="a" style="left:441.5px;top:146.5px;width:7px;height:7px;background:#303030"></div>
<svg style="left:442.5px;top:147.5px" width="6" height="5"><path d="M0.5 2.5L2.2 4.3L5.5 0.5" fill="none" stroke="#ddd" stroke-width="0.9"></path></svg>
<div class="a" style="left:454px;top:145px;width:12px;height:11px;background:#b8e8f4"></div>
<svg style="left:469.5px;top:143.5px" width="7" height="7"><path d="M0.5 1.5H5.5V4L3.5 6.5M1 4H4" fill="none" stroke="#e8e8e8" stroke-width="0.8"></path></svg>
<div class="t" id="r3" style="left: 476.5px; top: 147.4px; color: rgb(232, 238, 244); font-size: 6.6px; transform-origin: 0px 50%; transform: scaleX(0.8567);"><span class="jp" style="letter-spacing:.2px">ペイントレイヤー</span> 2</div>
<!-- row4 partial -->
<div class="a" style="left:454px;top:158.5px;width:12px;height:2px;background:#888"></div>
<!-- right icons rows -->
<svg style="left:725px;top:114px" width="8" height="8"><path d="M1 3.5H7V7.5H1Z" fill="#8a8a8a"></path><path d="M4.5 3.5V1.8A1.5 1.5 0 0 1 7 1.8" fill="none" stroke="#8a8a8a" stroke-width="0.9"></path></svg><div class="t" style="left:736px;top:112px;color:#8a8a8a;font-size:10px;font-style:italic;line-height:11px">α</div><div class="a" style="left:747px;top:113.5px;width:8px;height:8px;background-color:#6a6a6a;background-image:linear-gradient(45deg,#aaa 25%,transparent 25%,transparent 75%,#aaa 75%),linear-gradient(45deg,#aaa 25%,transparent 25%,transparent 75%,#aaa 75%);background-size:4px 4px;background-position:0 0,2px 2px"></div><svg style="left:725px;top:130px" width="8" height="8"><path d="M1 3.5H7V7.5H1Z" fill="#8a8a8a"></path><path d="M4.5 3.5V1.8A1.5 1.5 0 0 1 7 1.8" fill="none" stroke="#8a8a8a" stroke-width="0.9"></path></svg><div class="t" style="left:736px;top:128px;color:#8a8a8a;font-size:10px;font-style:italic;line-height:11px">α</div><div class="a" style="left:747px;top:129.5px;width:8px;height:8px;background-color:#6a6a6a;background-image:linear-gradient(45deg,#aaa 25%,transparent 25%,transparent 75%,#aaa 75%),linear-gradient(45deg,#aaa 25%,transparent 25%,transparent 75%,#aaa 75%);background-size:4px 4px;background-position:0 0,2px 2px"></div><svg style="left:725px;top:146px" width="8" height="8"><path d="M1 3.5H7V7.5H1Z" fill="#8a8a8a"></path><path d="M4.5 3.5V1.8A1.5 1.5 0 0 1 7 1.8" fill="none" stroke="#8a8a8a" stroke-width="0.9"></path></svg><div class="t" style="left:736px;top:144px;color:#8a8a8a;font-size:10px;font-style:italic;line-height:11px">α</div><div class="a" style="left:747px;top:145.5px;width:8px;height:8px;background-color:#6a6a6a;background-image:linear-gradient(45deg,#aaa 25%,transparent 25%,transparent 75%,#aaa 75%),linear-gradient(45deg,#aaa 25%,transparent 25%,transparent 75%,#aaa 75%);background-size:4px 4px;background-position:0 0,2px 2px"></div>

<!-- list scrollbar -->
<div class="a" style="left:758px;top:100px;width:8px;height:61px;background:#3a3a3a"></div>
<div class="a" style="left:758.5px;top:101px;width:7px;height:8px;background:#444"></div>
<svg style="left:760px;top:104px" width="4" height="2"><path d="M0 2H4L2 0Z" fill="#ccc"></path></svg>
<div class="a" style="left:758.5px;top:126px;width:7px;height:23px;background:#474747;border:1px solid #3e3e3e"></div>
<div class="a" style="left:758.5px;top:152px;width:7px;height:8px;background:#444"></div>
<svg style="left:760px;top:155px" width="4" height="2"><path d="M0 0H4L2 2Z" fill="#ccc"></path></svg>
<!-- layer buttons -->
<svg style="left:428px;top:165px" width="11" height="11"><path d="M5.5 0.5V10.5M0.5 5.5H10.5" stroke="#ddd" stroke-width="1.2"></path></svg>
<svg style="left:444px;top:169px" width="5" height="3"><path d="M0 0H5L2.5 3Z" fill="#aaa"></path></svg>
<svg style="left:453px;top:164px" width="12" height="12"><rect x="3.5" y="0.5" width="8" height="8" fill="none" stroke="#ddd" stroke-width="1"></rect><path d="M1 3V11H9" fill="none" stroke="#ddd" stroke-width="1"></path></svg>
<svg style="left:472px;top:167px" width="12" height="7"><path d="M0.5 0.5L6 6L11.5 0.5" fill="none" stroke="#ddd" stroke-width="1.1"></path></svg>
<svg style="left:491px;top:167px" width="12" height="7"><path d="M0.5 6.5L6 1L11.5 6.5" fill="none" stroke="#ddd" stroke-width="1.1"></path></svg>
<svg style="left:508px;top:165px" width="12" height="11"><path d="M0.5 2H11.5M0.5 5.5H11.5M0.5 9H11.5" stroke="#ddd" stroke-width="1"></path><rect x="6" y="0.5" width="2" height="3" fill="#3d3d3d" stroke="#ddd" stroke-width="0.8"></rect><rect x="3" y="4" width="2" height="3" fill="#3d3d3d" stroke="#ddd" stroke-width="0.8"></rect><rect x="6" y="7.5" width="2" height="3" fill="#3d3d3d" stroke="#ddd" stroke-width="0.8"></rect></svg>
<svg style="left:521px;top:169px" width="5" height="3"><path d="M0 0H5L2.5 3Z" fill="#aaa"></path></svg>
<svg style="left:752px;top:164px" width="10" height="13"><path d="M0.5 2.5H9.5" stroke="#ddd" stroke-width="1"></path><path d="M3.5 2V0.8H6.5V2" fill="none" stroke="#ddd" stroke-width="0.8"></path><path d="M1.5 4H8.5L8 12.5H2Z" fill="#ddd"></path></svg>
<!-- separator dots -->
<div class="a" style="left:591px;top:180.5px;width:12px;height:1px;border-top:1px dotted #777"></div>

<!-- AI docker -->
<svg style="left:425.5px;top:183px" width="9" height="9"><circle cx="4.5" cy="4.5" r="4" fill="none" stroke="#bbb" stroke-width="0.8"></circle><path d="M2.5 6.5H6.5V4.5H2.5Z" fill="#ccc"></path><path d="M3.3 4.5V3.3A1.2 1.2 0 0 1 5.7 3.3V4.5" fill="none" stroke="#ccc" stroke-width="0.8"></path></svg>
<div class="t" id="ah" style="left: 437.5px; top: 184.5px; color: rgb(204, 204, 204); font-size: 7px; transform-origin: 0px 50%; transform: scaleX(0.9382);">AI Image Generation</div>
<svg style="left:743px;top:183px" width="9" height="8"><rect x="0.5" y="3" width="5" height="4.5" fill="none" stroke="#ccc" stroke-width="0.9"></rect><path d="M3 3V0.5H8.5V5H5.5" fill="none" stroke="#ccc" stroke-width="0.9"></path></svg>
<svg style="left:757.5px;top:183.5px" width="7" height="7"><path d="M0.5 0.5L6.5 6.5M6.5 0.5L0.5 6.5" stroke="#ccc" stroke-width="1"></path></svg>
<svg style="left:427px;top:195.5px" width="10" height="10"><circle cx="5" cy="5" r="4.4" fill="none" stroke="#ddd" stroke-width="0.9"></circle><path d="M3.8 2.8L7.2 5L3.8 7.2Z" fill="#ddd"></path></svg>
<svg style="left:439px;top:199.5px" width="5" height="3"><path d="M0 0H5L2.5 3Z" fill="#aaa"></path></svg>
<div class="a" style="left:454px;top:196px;width:2px;height:9px;background:#ddd"></div>
<div class="a" style="left:458.5px;top:196px;width:2px;height:9px;background:#ddd"></div>
<svg style="left:469px;top:195px" width="11" height="11"><path d="M4 0.5H10.5V10.5H4" fill="none" stroke="#ddd" stroke-width="0.9"></path><path d="M0.5 5.5H5M3 3.5L5.5 5.5L3 7.5" fill="none" stroke="#ddd" stroke-width="1"></path><path d="M7 3H9.5M7 5.5H9.5M7 8H9.5" stroke="#bbb" stroke-width="0.6"></path></svg>
<div class="a" style="left:486px;top:194px;width:260px;height:13.5px;background:linear-gradient(#474747,#414141);border:1px solid #383838;border-top-color:#505050;border-radius:2px"></div>
<div class="a" style="left:490px;top:197.5px;width:8px;height:6px;background:#ccc;border-radius:1px"></div>
<div class="t" style="left:491px;top:197px;color:#333;font-size:5px;font-weight:bold">1.5</div>
<div class="t" id="ts" style="left: 499.21px; top: 197.5px; color: rgb(212, 212, 212); transform-origin: 0px 50%; transform: scaleX(0.9215);">Test Stylke</div>
<svg style="left:738px;top:199.5px" width="5" height="3"><path d="M0 0H5L2.5 3Z" fill="#aaa"></path></svg>
<svg style="left:751px;top:195px" width="13" height="12"><circle cx="5" cy="5" r="3.2" fill="none" stroke="#d0d0d0" stroke-width="1.6" stroke-dasharray="1.2 0.8"/><circle cx="5" cy="5" r="2.4" fill="none" stroke="#d0d0d0" stroke-width="1.4"/><circle cx="10" cy="9" r="1.6" fill="none" stroke="#ccc" stroke-width="1.1"/></svg>
<!-- slider -->
<div class="a" style="left:425px;top:217px;width:187px;height:1.8px;background:#333"></div>
<div class="a" style="left:425px;top:217px;width:128px;height:1.8px;background:#557a9c"></div>
<div class="a" style="left:552px;top:214px;width:7px;height:7px;border-radius:50%;background:#555;border:1px solid #3a3a3a"></div>
<div class="a" style="left:617.5px;top:211.5px;width:57px;height:12px;background:#393939;border-radius:2px"></div>
<div class="t" id="st" style="left: 619.21px; top: 214.5px; color: rgb(212, 212, 212); transform-origin: 0px 50%; transform: scaleX(0.9194);">Strength: 70%</div>
<svg style="left:668px;top:213px" width="5" height="10"><path d="M0.5 3L2.5 1L4.5 3M0.5 7L2.5 9L4.5 7" fill="none" stroke="#aaa" stroke-width="0.8"></path></svg>
<div class="a" style="left:680px;top:211.5px;width:66px;height:12px;background:#393939;border-radius:2px"></div>
<div class="t" id="sd" style="left: 681.5px; top: 214.5px; color: rgb(212, 212, 212); transform-origin: 0px 50%; transform: scaleX(0.8957);">Seed: 1430357355</div>
<svg style="left:740px;top:213px" width="5" height="10"><path d="M0.5 3L2.5 1L4.5 3M0.5 7L2.5 9L4.5 7" fill="none" stroke="#aaa" stroke-width="0.8"></path></svg>
<svg style="left:751.5px;top:211.5px" width="11" height="11"><path d="M5.5 0.5L10 3V8L5.5 10.5L1 8V3Z M1 3L5.5 5.5L10 3M5.5 5.5V10.5" fill="none" stroke="#ccc" stroke-width="0.9"></path></svg>
<!-- prompt -->
<div class="a" style="left:425px;top:228px;width:320px;height:12.75px;background:#393939;border-radius:2px"></div>
<div class="t" id="pr" style="left: 425.5px; top: 231.5px; color: rgb(212, 212, 212); font-size: 6.4px; transform-origin: 0px 50%; transform: scaleX(1.0028);">1girl, blue hair, pony tails, crop top, light smile, on the street, summer, sun, v</div>
<svg style="left:751px;top:228.5px" width="13" height="11"><path d="M5 0.5L9 2.5V4M9 7.5V8.5L5 10.5L1 8.5V2.5Z M1 2.5L5 4.5L9 2.5M5 4.5V10.5" fill="none" stroke="#bbb" stroke-width="0.8"></path><path d="M10 5V10M7.5 7.5H12.5" stroke="#ccc" stroke-width="1"></path></svg>
<!-- image -->
<div class="a" style="left:424px;top:248px;width:242.5px;height:243px;background:#eeeeea;overflow:hidden" id="img"><!--IMG--><svg style="left:0;top:0" width="242.5" height="243" viewBox="0 0 242.5 243">
<defs>
<filter id="bl" x="-10%" y="-10%" width="120%" height="120%"><feGaussianBlur stdDeviation="0.6"/></filter>
<filter id="bl2" x="-20%" y="-20%" width="140%" height="140%"><feGaussianBlur stdDeviation="1.3"/></filter>
<linearGradient id="hairg" x1="0" y1="0" x2="0" y2="1"><stop offset="0" stop-color="#a4d6f6"/><stop offset="1" stop-color="#7cbcec"/></linearGradient>
<linearGradient id="hairL" x1="0" y1="0" x2="1" y2="0"><stop offset="0" stop-color="#78b8ea"/><stop offset="0.6" stop-color="#96ccf2"/><stop offset="1" stop-color="#68aae4"/></linearGradient>
<linearGradient id="hairR" x1="0" y1="0" x2="1" y2="0"><stop offset="0" stop-color="#68aae4"/><stop offset="0.5" stop-color="#98ccf2"/><stop offset="1" stop-color="#80c0ee"/></linearGradient>
<linearGradient id="topg" x1="0" y1="0" x2="0.3" y2="1"><stop offset="0" stop-color="#bcf2e8"/><stop offset="0.5" stop-color="#a4e4de"/><stop offset="1" stop-color="#8ccede"/></linearGradient>
<linearGradient id="armL" x1="0" y1="0" x2="1" y2="0"><stop offset="0" stop-color="#dcaa94"/><stop offset="0.4" stop-color="#f2ccb8"/><stop offset="1" stop-color="#eac0aa"/></linearGradient>
<linearGradient id="armR" x1="0" y1="0" x2="1" y2="0"><stop offset="0" stop-color="#ecc4b2"/><stop offset="0.6" stop-color="#f6d6c8"/><stop offset="1" stop-color="#ecc4b2"/></linearGradient>
<linearGradient id="faceg" x1="0" y1="0" x2="0" y2="1"><stop offset="0" stop-color="#f8e0d2"/><stop offset="1" stop-color="#f4d4c2"/></linearGradient>
</defs>
<rect width="243" height="243" fill="#fcfcfa"/>
<g filter="url(#bl2)">
<!-- left building -->
<path d="M0 0H44V112H0Z" fill="#f2efea"/>
<path d="M10 0H13V30H10ZM16 0H18.5V30H16ZM27 0H29.5V32H27ZM33 0H35.5V32H33Z" fill="#b4c0c4"/>
<path d="M0 31H44V34H0Z" fill="#d8d4ce"/>
<path d="M4.5 52H40V59.5H4.5Z" fill="#64747a"/>
<path d="M5 59.5H40V112H5Z" fill="#a8b4b6"/>
<path d="M12 60H16V112H12ZM24 60H27V112H24Z" fill="#dde0de"/>
<path d="M44 4H68V104H44Z" fill="#eeeeea"/>
<path d="M44 17H62V48H44Z" fill="#a8b4b2"/>
<path d="M44 55H62V66H44Z" fill="#c4cec8"/>
<path d="M43 37H50V46H43Z" fill="#a8c8a4"/>
<path d="M42 76H56V96H42Z" fill="#b8d0b0"/>
<!-- right building / tree / far poles -->
<path d="M226 47H243V100H226Z" fill="#dcdcdc"/>
<path d="M177 58H183V100H177Z" fill="#dde2e4"/>
<path d="M195 70Q203 64 210 72V88H195Z" fill="#d0e4c4"/>
<!-- pavement -->
<path d="M0 104H243V243H0Z" fill="#ebeae6"/>
<path d="M0 104H243V140L0 200Z" fill="#f4f3f0"/>
<path d="M0 190L50 156L62 158L0 205Z" fill="#fbfaf8"/>
<path d="M160 120L243 168V243H160Z" fill="#f5f1ef"/>
<path d="M180 150L243 192V205L172 158Z" fill="#fcfbfa"/>
<!-- cars -->
<path d="M184 95H213V121H184Z" fill="#e8eaec"/>
<path d="M200 98H212.5V105H200Z" fill="#8c9caa"/>
<path d="M186 117H213V124H186Z" fill="#8a9aa0"/>
<path d="M220 95.6H243V125H220Z" fill="#e8eaec"/>
<path d="M229 98.6H243V107H229Z" fill="#8c9caa"/>
<path d="M222 120H243V129H222Z" fill="#8a9aa0"/>
<!-- shadows -->
<path d="M192 145L211 143L214 149L196 151Z" fill="#94a2b0"/>
<path d="M227 176L243 172V186L235 184Z" fill="#8498a8"/>
<!-- pedestrians -->
<circle cx="9" cy="90.5" r="5.2" fill="#6a5040"/>
<path d="M2 95H19L20 125H3Z" fill="#a4acca"/>
<path d="M4 125H16V142H4Z" fill="#a49c94"/>
<path d="M6 142H14V150H6Z" fill="#d8b8a4"/>
<circle cx="29" cy="96" r="4.3" fill="#8a6a58"/>
<path d="M22 101H35L36 126H21Z" fill="#cadeee"/>
<path d="M25 126H32V151H25Z" fill="#e4cab8"/>
<circle cx="44" cy="93" r="4.3" fill="#8a6450"/>
<path d="M39 99H50L51 117H39Z" fill="#52628e"/>
<path d="M37 116H46V126H37Z" fill="#ece8e0"/>
<path d="M38 126H44V148H38Z" fill="#e4c8b4"/>
</g>
<g filter="url(#bl)">
<!-- pole -->
<path d="M213.5 0H219.3V118H213.5Z" fill="#6e8894"/>
<path d="M168 13.8H214V16.2H168Z" fill="#7e9aa6"/>
<path d="M166.5 11H171V21.6H166.5Z" fill="#7aa8c8"/>
<path d="M167 25H169.5V31H167Z" fill="#e6dcb0"/>
<path d="M202 30H211V70H202Z" fill="#6a8a94"/>
<path d="M202 52H211V61H202Z" fill="#d87c66"/>
<path d="M214 36H224V50.6H214ZM214 53.5H227V71.4H214Z" fill="#7a98a2"/>
<path d="M210 115.7H223V144H210Z" fill="#4e6a6c"/>
<!-- ponytails -->
<path d="M77 31Q64 42 60 60Q56 80 53 105Q50 122 49 126Q52 134 56.5 140Q60 132 64 128Q68 136 72 142Q78 130 82 124Q86 130 92 126Q88 112 86 95Q84 70 88 45L90 32Z" fill="url(#hairL)"/>
<path d="M143 30Q160 38 167 55Q176 80 181 105Q185 122 184 130Q180 134 178 134Q174 126 170 122Q168 130 164 134Q160 124 157 118Q156 105 155 92Q152 70 146 52Z" fill="url(#hairR)"/>
<!-- shoulders/arms skin -->
<path d="M65 141Q72 137 80 137L146 133Q165 134 175 142Q182 152 184 167L188.5 212L193 243H65Q58 228 57 212Q53 190 53.5 178Q54 160 56 151Q59 144 65 141Z" fill="url(#armL)"/>
<path d="M150 138Q168 134 176 142Q183 152 185 168L189 212L193 243H168Q170 200 166 170Z" fill="url(#armR)"/>
<path d="M84 138Q121 128 148 134L156 172H90Z" fill="#f6dccc"/>
<!-- neck -->
<path d="M103 108H133V134Q118 140 103 134Z" fill="#ecc4ac"/>
<!-- choker -->
<path d="M101.5 125.5Q117 130.5 133.6 125.5V131.5Q117 136.5 101.5 131.5Z" fill="#1c1e28"/>
<!-- face -->
<path d="M78 72Q78 46 115 44Q152 46 153 72Q153 92 144 104Q130 122 114 122Q100 122 88 104Q78 92 78 72Z" fill="url(#faceg)"/>
<ellipse cx="95" cy="100" rx="7" ry="4" fill="#f4b4ac" opacity=".45"/>
<ellipse cx="137" cy="98" rx="7" ry="4" fill="#f4b4ac" opacity=".45"/>
<path d="M148 82Q156 84 153 96L147 98Z" fill="#eec6b2"/>
<!-- head hair with bangs -->
<path d="M79 96Q70 60 79 38Q92 21 118 20Q144 21 155 40Q164 60 154 96Q150 84 148 74L144 80Q138 70 130 64Q126 72 121 88Q116 74 106 62Q100 70 92 72L86 90Z" fill="url(#hairg)"/>
<path d="M98 32Q114 25 132 32L128 40Q114 35 102 40Z" fill="#c8e8fa"/>
<path d="M106 62Q112 50 116 36M130 64Q133 50 134 36M92 72Q96 55 100 40M121 88Q118 70 120 50" stroke="#6aa8dc" stroke-width="0.9" fill="none"/>
<path d="M80 60Q78 90 82 112Q86 118 90 112Q88 96 90 80L92 66Z" fill="#7cbcec"/>
<path d="M151 60Q155 90 151 110Q147 116 144 110Q146 95 144 80L143 66Z" fill="#7cbcec"/>
<!-- hair ties -->
<path d="M83 26L91 25L86 45L76 62L74 58L82 42Z" fill="#283040"/>
<path d="M134 22L140 23L146 38L153 53L149 55L140 38Z" fill="#283040"/>
<!-- eyes -->
<ellipse cx="97.2" cy="88.4" rx="7.6" ry="4.4" fill="#f2f2f2"/>
<ellipse cx="98.3" cy="88.4" rx="4.6" ry="4.4" fill="#7aa0b4"/>
<ellipse cx="98.3" cy="89" rx="2" ry="2.2" fill="#405868"/>
<path d="M89.5 85.5Q97 80.8 105 84.6" stroke="#2a2a36" stroke-width="1.8" fill="none"/>
<ellipse cx="132.8" cy="86.2" rx="7.6" ry="4.4" fill="#f2f2f2"/>
<ellipse cx="131.8" cy="86.2" rx="4.6" ry="4.4" fill="#7aa0b4"/>
<ellipse cx="131.8" cy="86.8" rx="2" ry="2.2" fill="#405868"/>
<path d="M125 83Q133 78.6 140.5 83" stroke="#2a2a36" stroke-width="1.8" fill="none"/>
<path d="M94 76.5H103M124 73.8Q128 73 132 74" stroke="#6aaede" stroke-width="1" fill="none"/>
<circle cx="116.7" cy="98.8" r="1.2" fill="#fff4ee"/>
<path d="M108.5 109Q116 111.5 123 109" stroke="#d08a80" stroke-width="1" fill="none"/>
<!-- top -->
<path d="M79 140Q86 168 114 173Q138 170 146 150L160 180L162.6 190L159 232Q120 236 74 232L71.5 174Z" fill="url(#topg)"/>
<path d="M73 212Q120 220 161 210L159 232Q120 236 74 232Z" fill="#88cede"/>
<!-- straps -->
<path d="M78 138H84.5L77.5 175L77.5 196H71.5L71.5 172Z" fill="#22262e"/>
<path d="M144.6 133H152.5L163 188L158 192L150 174Z" fill="#22262e"/>
<!-- midriff -->
<path d="M74 232Q120 236 159 232L158 243H76Z" fill="#f0d0be"/>
<!-- bag strap -->
<path d="M155 136H168L174 243H162Z" fill="#eeebdc"/>
<path d="M162 170H171L174 243H164Z" fill="#a4c4d8"/>
</g>
<rect x="0" y="0" width="1" height="243" fill="#bbb"/>
</svg><!--/IMG--></div>


<!-- ===== status bar ===== -->
<div class="a" style="left:0;top:517.5px;width:768px;height:18px;background:#484848"></div>
<div class="a" style="left:0;top:535.5px;width:768px;height:2.5px;background:#2a2a2a"></div>
<svg style="left:5px;top:521px" width="10" height="10"><rect x="0.5" y="0.5" width="9" height="9" rx="1" fill="none" stroke="#aaa" stroke-width="0.9"></rect><rect x="3" y="3" width="4" height="4" fill="none" stroke="#aaa" stroke-width="0.7" stroke-dasharray="1 1"></rect></svg>
<div class="t" id="s1" style="left: 22.5px; top: 523.8px; color: rgb(204, 204, 204); transform-origin: 0px 50%; transform: scaleX(0.9622);">b) Basic-5 Size Opacity</div>
<div class="t" id="s2" style="left: 144.5px; top: 523.8px; color: rgb(204, 204, 204); transform-origin: 0px 50%; transform: scaleX(0.9964);">RGB/<span class="jp">アルファ</span> (8-<span class="jp">ビット整数</span>/<span class="jp">チャンネ</span>...GB-elle-V2-srgbtrc.icc</div>
<div class="a" style="left:491px;top:520.5px;width:69px;height:12px;background:#3d3d3d;border:1px solid #3a3a3a"></div>
<div class="a" style="left:492px;top:522px;width:1px;height:9px;background:#557a9c"></div>
<div class="t" id="s3" style="left: 496.5px; top: 523.8px; color: rgb(204, 204, 204); transform-origin: 0px 50%; transform: scaleX(0.9494);">512 x 512 (8.0 MiB)</div>
<div class="a" style="left:565.5px;top:522px;width:10px;height:10px;border-radius:50%;background:#2b2b2b"></div>
<div class="a" style="left:568px;top:526.5px;width:6px;height:1px;background:#ccc"></div>
<div class="t" id="s4" style="left: 581.5px; top: 523.8px; color: rgb(204, 204, 204); transform-origin: 0px 50%; transform: scaleX(0.9125);">0.00°</div>
<div class="t" id="s5" style="left: 659.1px; top: 523.8px; color: rgb(204, 204, 204); transform-origin: 0px 50%; transform: scaleX(0.9011);">100.0%</div>
<div class="a" style="left:691px;top:526px;width:47px;height:2px;background:#333;border-radius:1px"></div>
<div class="a" style="left:691px;top:526px;width:11px;height:2px;background:#557a9c"></div>
<div class="a" style="left:702px;top:523px;width:6px;height:8px;background:#444;border:1px solid #353535;border-radius:1px"></div>
<svg style="left:740px;top:523px" width="11" height="9"><rect x="0.5" y="0.5" width="10" height="6" rx="1" fill="none" stroke="#ccc"></rect><path d="M3 8.5H8" stroke="#ccc"></path><path d="M3.5 3.5H7.5M5.5 1.8V5.2" stroke="#ccc" stroke-width="0.8"></path></svg>

<svg style="left:759px;top:526px" width="8" height="9"><path d="M7 1L1 8M7 4L4 8M7 7L6.5 8" stroke="#6a6a6a" stroke-width="0.9" stroke-dasharray="1 0.8"/></svg>
</body></html>
